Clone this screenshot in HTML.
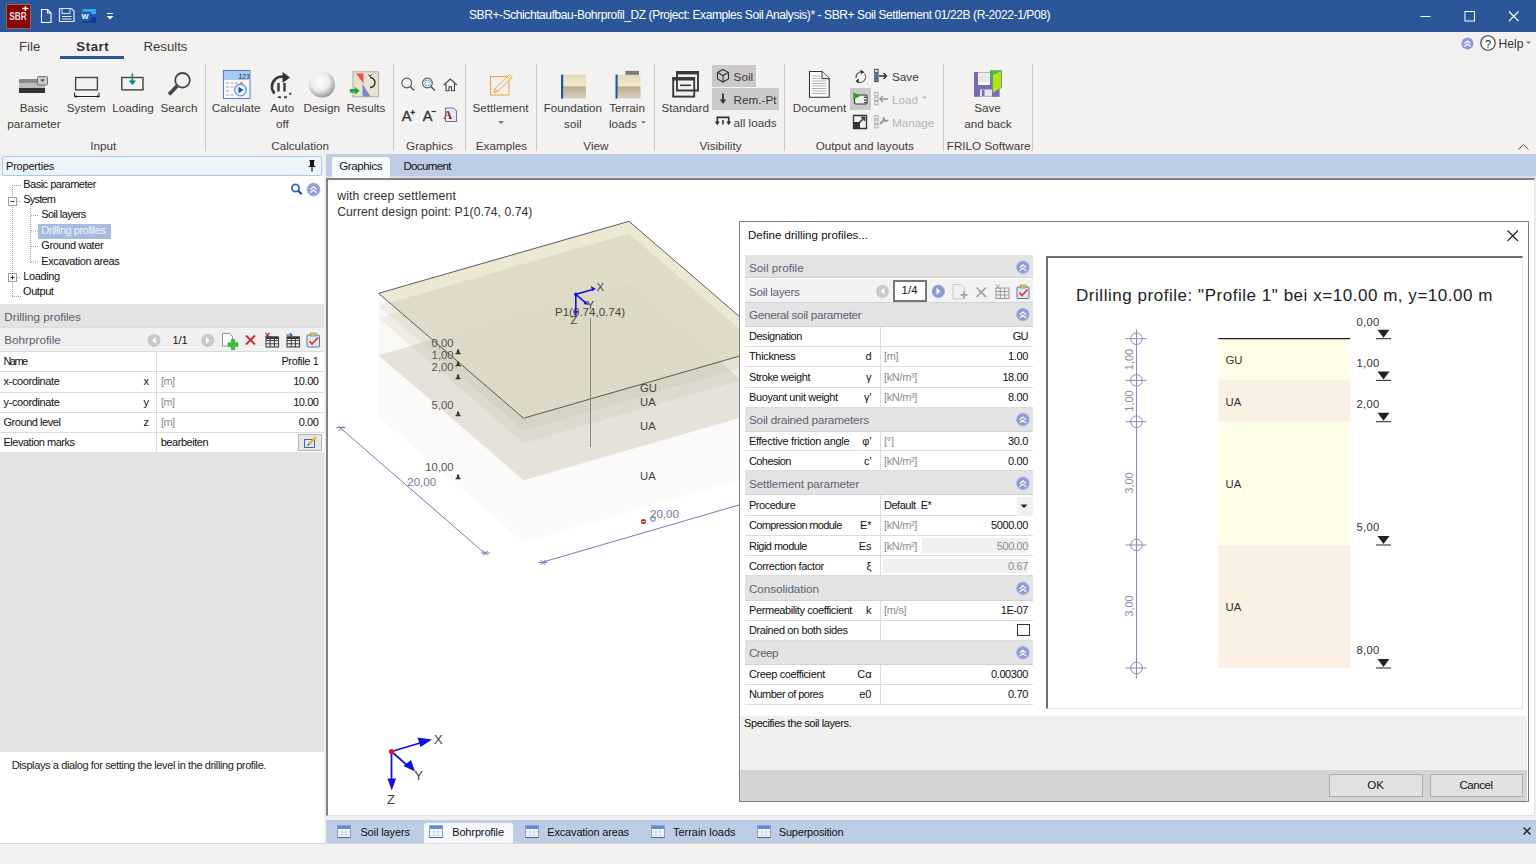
<!DOCTYPE html><html><head><meta charset="utf-8"><style>
html,body{margin:0;padding:0}
body{width:1536px;height:864px;position:relative;overflow:hidden;background:#f0f0f0;font-family:"Liberation Sans",sans-serif;}
.a{position:absolute;box-sizing:border-box}
.t{position:absolute;white-space:nowrap}
svg{position:absolute}
</style></head><body>
<div class="a" style="left:0px;top:0px;width:1536px;height:32px;background:#2b579a;"></div>
<div class="t" style="top:9.14px;font-size:12px;line-height:12px;color:#fff;letter-spacing:-0.410px;left:469px;">SBR+-Schichtaufbau-Bohrprofil_DZ (Project: Examples Soil Analysis)* - SBR+ Soil Settlement 01/22B (R-2022-1/P08)</div>
<div class="a" style="left:0px;top:32px;width:1536px;height:122px;background:#f3f2f1;"></div>
<div class="a" style="left:0px;top:154px;width:324px;height:689px;background:#fff;"></div>
<div class="a" style="left:326px;top:154px;width:1210px;height:22px;background:#bccde5;"></div>
<div class="a" style="left:326px;top:176px;width:1210px;height:2px;background:#d6e0ec;"></div>
<div class="a" style="left:326px;top:178px;width:1209px;height:638px;background:#fff;border-left:2px solid #828282;border-top:2px solid #828282;border-right:1px solid #e3e3e3;border-bottom:1px solid #e3e3e3;"></div>
<div class="a" style="left:326px;top:820px;width:1210px;height:23px;background:#bccde5;"></div>
<div class="a" style="left:0px;top:843px;width:1536px;height:21px;background:#f2f1f0;border-top:1px solid #d9d9d9;"></div>
<svg style="left:0;top:0" width="160" height="32">
<rect x="6.5" y="4.5" width="24" height="24" fill="#8b0000" stroke="#8a6a5a" stroke-width="1"/>
<text x="0" y="0" font-family="Liberation Sans" font-size="11" font-weight="bold" fill="#f0dede" text-anchor="middle" transform="translate(18,19.5) scale(0.75,0.98)">SBR</text>
<path d="M25.4 6.3v4.6M22.3 8.6h6.2" stroke="#fff" stroke-width="1.5"/>
<path d="M41.5 9.5h6l3.5 3.5v9.5h-9.5z M47.5 9.5v3.5h3.5" fill="none" stroke="#fff" stroke-width="1.1"/>
<path d="M59.5 8.5h12l2.5 2.5v10.5h-14.5z" fill="none" stroke="#dfe6f0" stroke-width="1.2"/>
<path d="M62 9v4.5h8V9" fill="none" stroke="#dfe6f0" stroke-width="1"/>
<path d="M62 16.5h9.5M62 19h9.5" stroke="#dfe6f0" stroke-width="1"/>
<rect x="81" y="9" width="15" height="14" fill="#185abd"/>
<rect x="81" y="9" width="15" height="5" fill="#41a5ee"/>
<rect x="81" y="17" width="15" height="6" fill="#103f91"/>
<rect x="80.9" y="9" width="1.5" height="14" fill="#0a7a5a"/><rect x="80.9" y="11.7" width="10" height="9.3" fill="#1f5bb8"/>
<text x="85" y="19" font-family="Liberation Sans" font-size="7.5" font-weight="bold" fill="#fff" text-anchor="middle">W</text>
<path d="M107 13.5h6" stroke="#fff" stroke-width="1"/>
<path d="M106.5 16h7l-3.5 3.5z" fill="#fff"/>
</svg>
<svg style="left:1400;top:0;left:1400px" width="136" height="32">
<path d="M20.5 16.5h10" stroke="#fff" stroke-width="1"/>
<rect x="65" y="11.5" width="9.5" height="9.5" fill="none" stroke="#fff" stroke-width="1"/>
<path d="M109 11.5l9.5 9.5M118.5 11.5l-9.5 9.5" stroke="#fff" stroke-width="1.1"/>
</svg>
<div class="t" style="top:39.63px;font-size:13.2px;line-height:13.2px;color:#3c3c3c;letter-spacing:0.033px;left:19px;">File</div>
<div class="t" style="top:39.63px;font-size:13.2px;line-height:13.2px;color:#333;font-weight:bold;letter-spacing:0.585px;left:76.3px;">Start</div>
<div class="t" style="top:39.63px;font-size:13.2px;line-height:13.2px;color:#3c3c3c;letter-spacing:-0.002px;left:143.5px;">Results</div>
<div class="a" style="left:60px;top:56px;width:64px;height:3px;background:#2b579a;"></div>
<svg style="left:1455px;top:32px" width="81" height="26">
<circle cx="12.5" cy="11.5" r="6" fill="#8e9bd8"/>
<path d="M9.5 11.5l3-2.5 3 2.5M9.5 14.5l3-2.5 3 2.5" fill="none" stroke="#fff" stroke-width="1.2"/>
<circle cx="33" cy="11" r="7.2" fill="#fff" stroke="#333" stroke-width="1.1"/>
<text x="33" y="15.5" font-family="Liberation Sans" font-size="11" fill="#222" text-anchor="middle">?</text>
<path d="M71 9.5h5l-2.5 2.5z" fill="#777"/>
</svg>
<div class="t" style="top:37.96px;font-size:12.1px;line-height:12.1px;color:#333;left:1498.5px;">Help</div>
<svg style="left:1515px;top:140px" width="18" height="12"><path d="M3.5 9.5l5-5 5 5" fill="none" stroke="#555" stroke-width="1"/></svg>
<div class="a" style="left:205px;top:64px;width:1px;height:87px;background:#c8c8c8;"></div>
<div class="a" style="left:393px;top:64px;width:1px;height:87px;background:#c8c8c8;"></div>
<div class="a" style="left:465px;top:64px;width:1px;height:87px;background:#c8c8c8;"></div>
<div class="a" style="left:536px;top:64px;width:1px;height:87px;background:#c8c8c8;"></div>
<div class="a" style="left:654px;top:64px;width:1px;height:87px;background:#c8c8c8;"></div>
<div class="a" style="left:784px;top:64px;width:1px;height:87px;background:#c8c8c8;"></div>
<div class="a" style="left:943px;top:64px;width:1px;height:87px;background:#c8c8c8;"></div>
<div class="a" style="left:1032px;top:64px;width:1px;height:87px;background:#c8c8c8;"></div>
<div class="t" style="top:102.30px;font-size:11.7px;line-height:11.7px;color:#3c3c3c;left:-366px;width:800px;text-align:center;">Basic</div>
<div class="t" style="top:117.70px;font-size:11.7px;line-height:11.7px;color:#3c3c3c;left:-366px;width:800px;text-align:center;">parameter</div>
<div class="t" style="top:102.30px;font-size:11.7px;line-height:11.7px;color:#3c3c3c;left:-313.7px;width:800px;text-align:center;">System</div>
<div class="t" style="top:102.30px;font-size:11.7px;line-height:11.7px;color:#3c3c3c;left:-267px;width:800px;text-align:center;">Loading</div>
<div class="t" style="top:102.30px;font-size:11.7px;line-height:11.7px;color:#3c3c3c;left:-221.1px;width:800px;text-align:center;">Search</div>
<div class="t" style="top:139.70px;font-size:11.7px;line-height:11.7px;color:#3c3c3c;left:-296.8px;width:800px;text-align:center;">Input</div>
<div class="t" style="top:102.30px;font-size:11.7px;line-height:11.7px;color:#3c3c3c;left:-163.8px;width:800px;text-align:center;">Calculate</div>
<div class="t" style="top:102.30px;font-size:11.7px;line-height:11.7px;color:#3c3c3c;left:-117.69999999999999px;width:800px;text-align:center;">Auto</div>
<div class="t" style="top:117.70px;font-size:11.7px;line-height:11.7px;color:#3c3c3c;left:-117.69999999999999px;width:800px;text-align:center;">off</div>
<div class="t" style="top:102.30px;font-size:11.7px;line-height:11.7px;color:#3c3c3c;left:-78.30000000000001px;width:800px;text-align:center;">Design</div>
<div class="t" style="top:102.30px;font-size:11.7px;line-height:11.7px;color:#3c3c3c;left:-34.10000000000002px;width:800px;text-align:center;">Results</div>
<div class="t" style="top:139.70px;font-size:11.7px;line-height:11.7px;color:#3c3c3c;left:-99.89999999999998px;width:800px;text-align:center;">Calculation</div>
<div class="t" style="top:139.70px;font-size:11.7px;line-height:11.7px;color:#3c3c3c;left:29.5px;width:800px;text-align:center;">Graphics</div>
<div class="t" style="top:102.30px;font-size:11.7px;line-height:11.7px;color:#3c3c3c;left:100.5px;width:800px;text-align:center;">Settlement</div>
<div class="t" style="top:139.70px;font-size:11.7px;line-height:11.7px;color:#3c3c3c;left:101.5px;width:800px;text-align:center;">Examples</div>
<div class="t" style="top:102.30px;font-size:11.7px;line-height:11.7px;color:#3c3c3c;left:172.89999999999998px;width:800px;text-align:center;">Foundation</div>
<div class="t" style="top:117.70px;font-size:11.7px;line-height:11.7px;color:#3c3c3c;left:172.89999999999998px;width:800px;text-align:center;">soil</div>
<div class="t" style="top:102.30px;font-size:11.7px;line-height:11.7px;color:#3c3c3c;left:227.10000000000002px;width:800px;text-align:center;">Terrain</div>
<div class="t" style="top:117.70px;font-size:11.7px;line-height:11.7px;color:#3c3c3c;left:608.9px;">loads</div>
<div class="t" style="top:139.70px;font-size:11.7px;line-height:11.7px;color:#3c3c3c;left:195.89999999999998px;width:800px;text-align:center;">View</div>
<div class="t" style="top:102.30px;font-size:11.7px;line-height:11.7px;color:#3c3c3c;left:285.29999999999995px;width:800px;text-align:center;">Standard</div>
<div class="t" style="top:139.70px;font-size:11.7px;line-height:11.7px;color:#3c3c3c;left:320.5px;width:800px;text-align:center;">Visibility</div>
<div class="a" style="left:712px;top:65px;width:44px;height:22px;background:#cbcac9;"></div>
<div class="a" style="left:712px;top:88px;width:67px;height:22px;background:#cbcac9;"></div>
<div class="t" style="top:70.70px;font-size:11.7px;line-height:11.7px;color:#3c3c3c;left:733.6px;">Soil</div>
<div class="t" style="top:93.70px;font-size:11.7px;line-height:11.7px;color:#3c3c3c;left:733.6px;">Rem.-Pt</div>
<div class="t" style="top:116.50px;font-size:11.7px;line-height:11.7px;color:#3c3c3c;left:733.6px;">all loads</div>
<div class="t" style="top:102.30px;font-size:11.7px;line-height:11.7px;color:#3c3c3c;left:419.5px;width:800px;text-align:center;">Document</div>
<div class="t" style="top:139.70px;font-size:11.7px;line-height:11.7px;color:#3c3c3c;left:464.70000000000005px;width:800px;text-align:center;">Output and layouts</div>
<div class="a" style="left:850px;top:88px;width:21px;height:22px;background:#cbcac9;"></div>
<div class="t" style="top:70.70px;font-size:11.7px;line-height:11.7px;color:#3c3c3c;left:892px;">Save</div>
<div class="t" style="top:93.70px;font-size:11.7px;line-height:11.7px;color:#b4b4b4;left:892px;">Load</div>
<div class="t" style="top:116.70px;font-size:11.7px;line-height:11.7px;color:#b4b4b4;left:892px;">Manage</div>
<div class="t" style="top:102.30px;font-size:11.7px;line-height:11.7px;color:#3c3c3c;left:587.5px;width:800px;text-align:center;">Save</div>
<div class="t" style="top:117.70px;font-size:11.7px;line-height:11.7px;color:#3c3c3c;left:587.9px;width:800px;text-align:center;">and back</div>
<div class="t" style="top:139.70px;font-size:11.7px;line-height:11.7px;color:#3c3c3c;left:588.7px;width:800px;text-align:center;">FRILO Software</div>
<svg style="left:0;top:60px" width="1040" height="80" >
<g transform="translate(0,-60)">
<!-- basic parameter -->
<rect x="19" y="79" width="26" height="4.5" fill="#8a8a8a"/>
<rect x="19" y="83.5" width="26" height="4.5" fill="#bdbdbd"/>
<rect x="19" y="88" width="26" height="5" fill="#333"/>
<rect x="37.5" y="76.5" width="10" height="8.5" rx="1" fill="#c8c8c8" stroke="#777" stroke-width="1"/>
<path d="M40.5 79.5h4l-2 2.2z" fill="#333"/>
<!-- system -->
<rect x="75.6" y="77.5" width="21.8" height="12.4" fill="none" stroke="#444" stroke-width="1.4"/>
<path d="M74 96.5h25.5M74.5 92.5v4.5M99 92.5v4.5" fill="none" stroke="#222" stroke-width="1"/>
<path d="M74 96.5l2.5-1.5v3zM99.5 96.5l-2.5-1.5v3z" fill="#222"/>
<!-- loading -->
<rect x="121.8" y="77.5" width="21.2" height="12.4" fill="none" stroke="#444" stroke-width="1.4"/>
<path d="M132.4 73.5v8" stroke="#00868b" stroke-width="1.6"/>
<path d="M128.6 80.5h7.6l-3.8 4.6z" fill="#00868b"/>
<!-- search -->
<circle cx="182.5" cy="80.3" r="7.3" fill="none" stroke="#444" stroke-width="1.8"/>
<path d="M177 86l-8 8.5" stroke="#444" stroke-width="3.6"/>
<!-- calculate -->
<rect x="223.5" y="70.5" width="26.5" height="28" fill="#f6f9fd" stroke="#4f7fcf" stroke-width="1"/>
<rect x="224" y="71" width="25.5" height="9" fill="#a9c8f2"/>
<text x="244" y="78.5" font-family="Liberation Sans" font-style="italic" font-size="7" fill="#233" text-anchor="middle">123</text>
<g fill="#c9cdd4"><rect x="226" y="82" width="3" height="2"/><rect x="230.5" y="82" width="3" height="2"/><rect x="235" y="82" width="3" height="2"/><rect x="226" y="86" width="3" height="2"/><rect x="230.5" y="86" width="3" height="2"/><rect x="226" y="90" width="3" height="2"/><rect x="226" y="94" width="3" height="2"/><rect x="230.5" y="94" width="3" height="2"/></g>
<rect x="240" y="82" width="3" height="2" fill="#e6a24a"/>
<circle cx="240.5" cy="90" r="5.8" fill="#eaf2fb" stroke="#5b93d6" stroke-width="1.3"/>
<path d="M238.5 86.8v6.4l5-3.2z" fill="#1a4fa8"/>
<!-- auto off -->
<path d="M274.5 93.5a10 10 0 0 1 9.5-16.5" fill="none" stroke="#3a3a3a" stroke-width="2.8"/>
<path d="M282.5 72l7.5 5.5-7.5 5.5z" fill="#333"/>
<path d="M278 96.8l3 0.7M284 97.5l3-0.7M289.5 94.5l1.5-1.5" stroke="#444" stroke-width="1.8"/>
<rect x="277.3" y="83" width="2.4" height="8.5" fill="#3a3a3a"/><rect x="283.3" y="83" width="2.4" height="8.5" fill="#3a3a3a"/>
<!-- design sphere -->
<defs><radialGradient id="sph" cx="0.42" cy="0.38" r="0.65"><stop offset="0" stop-color="#fff"/><stop offset="0.55" stop-color="#ececec"/><stop offset="0.9" stop-color="#a8a8a8"/><stop offset="1" stop-color="#808080"/></radialGradient></defs>
<circle cx="321.9" cy="84.5" r="13" fill="url(#sph)"/>
<!-- results -->
<rect x="353" y="71.8" width="25.5" height="25" fill="#e9e3cf" stroke="#aaa" stroke-width="1"/>
<path d="M356 73.5h7.5v10z" fill="#f05050"/>
<path d="M362.5 84v12.5h8z" fill="#6a8ec8"/>
<path d="M349.8 89h5v-2.3l5 4-5 4v-2.3h-5z" fill="#22aa33"/>
<path d="M370 77.5a5 5 0 0 1 0 10" fill="none" stroke="#222" stroke-width="1.3"/>
<path d="M368.5 74.5l1.5 2 1.5-2" fill="none" stroke="#222" stroke-width="1"/>
<!-- graphics small -->
<circle cx="406.7" cy="83" r="4.9" fill="none" stroke="#555" stroke-width="1.1"/>
<path d="M410.2 86.5l4 4" stroke="#555" stroke-width="1.5"/>
<circle cx="427.4" cy="83" r="4.9" fill="none" stroke="#555" stroke-width="1.1"/>
<rect x="425" y="80.6" width="4.8" height="4.8" fill="none" stroke="#3d9be0" stroke-width="1" stroke-dasharray="1.5 1"/>
<path d="M430.9 86.5l4 4" stroke="#555" stroke-width="1.5"/>
<path d="M443.8 85l6.5-6 6.5 6M446 84v6.8h3v-4h2.5v4h3V84" fill="none" stroke="#444" stroke-width="1.1"/>
<text x="401.8" y="121" font-family="Liberation Sans" font-size="14.5" fill="#333" stroke="#333" stroke-width="0.35">A</text>
<path d="M410.5 112.3h4.5M412.75 110v4.6" stroke="#333" stroke-width="1.2"/>
<text x="422.8" y="121" font-family="Liberation Sans" font-size="14.5" fill="#333" stroke="#333" stroke-width="0.35">A</text>
<path d="M431.5 111.5h4.5" stroke="#333" stroke-width="1.2"/>
<path d="M445.5 108h8l3 3v10.5h-11z" fill="#e3ebf6" stroke="#3a5a8a" stroke-width="0.8"/>
<text x="443.2" y="118.5" font-family="Liberation Serif" font-weight="bold" font-size="12.5" fill="#a01818">A</text>
<!-- settlement -->
<rect x="490.5" y="76.5" width="18.5" height="18.5" fill="none" stroke="#f5a040" stroke-width="1"/>
<path d="M494 92.5l1-4 14.5-14 2.8 2.8-14.5 14z M495 88.5l3 3 M507.5 76.5l2.8 2.8" fill="#f1f1f1" stroke="#f5a040" stroke-width="1"/>
<path d="M498 121h6l-3 3z" fill="#777"/>
<!-- foundation soil -->
<defs><linearGradient id="fs1" x1="0" y1="0" x2="0" y2="1"><stop offset="0" stop-color="#e3d8bf"/><stop offset="1" stop-color="#f2ecc9"/></linearGradient>
<linearGradient id="fs2" x1="0" y1="0" x2="0" y2="1"><stop offset="0" stop-color="#b7ac92"/><stop offset="1" stop-color="#d9d0c0"/></linearGradient></defs>
<rect x="563" y="74.6" width="23" height="11.8" fill="url(#fs1)"/><rect x="563" y="86.3" width="23" height="12.2" fill="url(#fs2)"/>
<rect x="561" y="74.6" width="2.2" height="24" fill="#1a5aa8"/>
<rect x="618" y="74.8" width="22.5" height="11.5" fill="url(#fs1)"/><rect x="618" y="86.3" width="22.5" height="12.2" fill="url(#fs2)"/>
<rect x="615.5" y="74.6" width="2.2" height="24" fill="#1a5aa8"/>
<rect x="625.5" y="70.9" width="13.5" height="3.9" fill="#7a7a7a"/>
<path d="M641 121.2h5l-2.5 2.5z" fill="#777"/>
<!-- standard -->
<path d="M677 72h21v18.5h-21z" fill="none" stroke="#3a3a3a" stroke-width="1.9"/>
<rect x="676.2" y="71" width="22.7" height="3.4" fill="#3a3a3a"/>
<rect x="673.2" y="78" width="21" height="18.6" fill="none" stroke="#3a3a3a" stroke-width="1.9"/>
<rect x="672.3" y="77.1" width="22.4" height="3.4" fill="#3a3a3a"/>
<path d="M680 85.3h11" stroke="#3a3a3a" stroke-width="1.6"/>
<!-- cube -->
<path d="M723 69.5l5.5 3v6.5l-5.5 3-5.5-3v-6.5z M717.5 72.5l5.5 3 5.5-3 M723 75.5v6.5" fill="none" stroke="#333" stroke-width="1.1"/>
<path d="M723 93.5v7" stroke="#333" stroke-width="1.8"/><path d="M719.8 99.5h6.4l-3.2 4.5z" fill="#333"/>
<path d="M717.3 122v-4.6h11.4v4.6 M723 120v4.5" fill="none" stroke="#333" stroke-width="1.6"/><path d="M714.8 121.5h5l-2.5 3.8zM726.2 121.5h5l-2.5 3.8z" fill="#333"/>
<!-- document -->
<path d="M809.5 71.5h12.5l7.2 7.2v18.6h-19.7z" fill="#fff" stroke="#333" stroke-width="1.1"/>
<path d="M822 71.5v7.2h7.2" fill="#eee" stroke="#333" stroke-width="1"/>
<g stroke="#999" stroke-width="0.8"><path d="M812 76h8M812 78.5h8M812 81h14M812 83.5h14M812 86h14M812 88.5h14M812 91h14M812 93.5h14"/></g>
<!-- refresh -->
<path d="M856 78a5.5 5.5 0 0 1 8-5.5M864.5 73.5a5.5 5.5 0 0 1-8 7.5" fill="none" stroke="#555" stroke-width="1.1"/>
<path d="M860.5 69.5l3.5 2.5-3 2.5z M859 83.5l-3.5-2.5 3-2.5z" fill="#333"/>
<rect x="854.5" y="95" width="12.5" height="9" rx="1.5" fill="#eee" stroke="#333" stroke-width="1.1"/><rect x="864.3" y="96.5" width="1.6" height="1.6" fill="#333"/><rect x="864.3" y="99.5" width="1.6" height="1.6" fill="#333"/><rect x="864.3" y="102" width="1.6" height="1.2" fill="#333"/>
<path d="M853.3 92.3L860 96L853.3 99.8z" fill="#2a9a2a"/>
<path d="M853.5 115.5h13v13h-13z" fill="none" stroke="#333" stroke-width="1.3"/>
<rect x="853.5" y="122" width="6.5" height="6.5" fill="#333"/>
<path d="M858.5 123.5l6-6M861 117.5h3.5v3.5" fill="none" stroke="#333" stroke-width="1.5"/>
<!-- save load manage -->
<g fill="none" stroke="#333" stroke-width="0.9"><rect x="874.7" y="69.3" width="3.4" height="3.4"/></g>
<rect x="874.7" y="73.8" width="3.4" height="3.4" fill="#39a0e8" stroke="#333" stroke-width="0.8"/>
<rect x="874.7" y="78.3" width="3.4" height="3.4" fill="#39a0e8" stroke="#333" stroke-width="0.8"/>
<path d="M879 76h7M883.5 73l3 3-3 3" fill="none" stroke="#333" stroke-width="1.4"/>
<g fill="none" stroke="#aaa" stroke-width="0.9"><rect x="874.7" y="92.5" width="3.4" height="3.4"/><rect x="874.7" y="97" width="3.4" height="3.4"/><rect x="874.7" y="101.5" width="3.4" height="3.4"/>
<rect x="874.7" y="115.5" width="3.4" height="3.4"/><rect x="874.7" y="120" width="3.4" height="3.4"/><rect x="874.7" y="124.5" width="3.4" height="3.4"/></g>
<path d="M880 99h8M883 96l-3 3 3 3" fill="none" stroke="#999" stroke-width="1.4"/>
<path d="M880 124l5-5M884 117a2.5 2.5 0 1 0 4 3" fill="none" stroke="#999" stroke-width="1.8"/>
<path d="M922 96.5h5l-2.5 2.5z" fill="#bbb"/>
<!-- save and back -->
<rect x="974" y="72" width="25.6" height="24.8" fill="#7b68b8"/>
<rect x="978" y="72.5" width="12" height="12.5" fill="#f4f4f4"/>
<g stroke="#ccc" stroke-width="0.6"><path d="M979 75h10M979 77h10M979 79h10M979 81h10"/></g>
<rect x="980" y="89.5" width="12" height="7" fill="#e6e6e6"/>
<rect x="982" y="90" width="2.5" height="6" fill="#7b68b8"/>
<path d="M989.8 70.2h12.2v17.5l-9 5.3z" fill="#48b848"/>
<path d="M993 75l8-4v16.5l-8 5.2z" fill="#b8e020"/>
</g></svg>
<div class="a" style="left:0px;top:154px;width:326px;height:689px;background:#f0f0f0;"></div>
<div class="a" style="left:0px;top:176px;width:324px;height:128px;background:#fff;"></div>
<div class="a" style="left:2px;top:156px;width:320px;height:20px;background:#eef5fd;border:1px solid #a9c9ef;border-radius:2px;"></div>
<div class="t" style="top:161.09px;font-size:11px;line-height:11px;color:#111;letter-spacing:-0.203px;left:6px;">Properties</div>
<svg style="left:306px;top:159px" width="12" height="14"><path d="M3.5 1.5h5M4.5 1.5v6M7.5 1.5v6M2.5 7.5h7M6 7.5v5" fill="none" stroke="#111" stroke-width="1.2"/><rect x="4.5" y="1.5" width="3" height="6" fill="#111"/></svg>
<div class="t" style="top:178.89px;font-size:11px;line-height:11px;color:#111;letter-spacing:-0.499px;left:23.2px;">Basic parameter</div>
<div class="t" style="top:194.29px;font-size:11px;line-height:11px;color:#111;letter-spacing:-0.779px;left:23.2px;">System</div>
<div class="t" style="top:209.49px;font-size:11px;line-height:11px;color:#111;letter-spacing:-0.567px;left:41.3px;">Soil layers</div>
<div class="a" style="left:38px;top:224px;width:73px;height:15px;background:#a6bbe2;"></div>
<div class="t" style="top:224.89px;font-size:11px;line-height:11px;color:#eef2fa;letter-spacing:-0.467px;left:41.3px;">Drilling profiles</div>
<div class="t" style="top:240.19px;font-size:11px;line-height:11px;color:#111;letter-spacing:-0.387px;left:41.3px;">Ground water</div>
<div class="t" style="top:255.69px;font-size:11px;line-height:11px;color:#111;letter-spacing:-0.398px;left:41.3px;">Excavation areas</div>
<div class="t" style="top:270.89px;font-size:11px;line-height:11px;color:#111;letter-spacing:-0.378px;left:23.2px;">Loading</div>
<div class="t" style="top:286.39px;font-size:11px;line-height:11px;color:#111;letter-spacing:-0.420px;left:23px;">Output</div>
<svg style="left:0;top:176px" width="60" height="128"><g transform="translate(0,-176)" fill="none" stroke="#a0a0a0" stroke-width="1" stroke-dasharray="1 1">
<path d="M12.5 185v111M12 185.5h9M17 201.5h4M17 277.5h4M12 296.5h9M30.5 206v57M31 215.5h8M31 231h7M31 246.5h8M31 262h8"/>
</g>
<g transform="translate(0,-176)">
<rect x="8.5" y="197.5" width="8" height="8" fill="#fff" stroke="#a0a0a0"/><path d="M10.5 201.5h4" stroke="#333"/>
<rect x="8.5" y="273.5" width="8" height="8" fill="#fff" stroke="#a0a0a0"/><path d="M10.5 277.5h4M12.5 275.5v4" stroke="#333"/>
</g></svg>
<svg style="left:288px;top:180px" width="34" height="18"><g transform="translate(-288,-180)">
<circle cx="295.5" cy="188" r="3.6" fill="none" stroke="#2a6cc0" stroke-width="1.8"/><path d="M298.2 190.7l3.5 3.5" stroke="#1b4f9a" stroke-width="2.2"/>
<circle cx="313.5" cy="189.5" r="6.5" fill="#8e9bd8"/><circle cx="313.5" cy="189.5" r="6.5" fill="none" stroke="#b3bde8" stroke-width="1"/>
<path d="M310.3 189.5l3.2-2.7 3.2 2.7M310.3 192.8l3.2-2.7 3.2 2.7" fill="none" stroke="#fff" stroke-width="1.3"/>
</g></svg>
<div class="a" style="left:0px;top:304px;width:324px;height:23px;background:#e3e3e3;"></div>
<div class="t" style="top:310.50px;font-size:11.7px;line-height:11.7px;color:#596070;left:4.3px;">Drilling profiles</div>
<div class="a" style="left:0px;top:327px;width:324px;height:24px;background:#f0f0f0;border-top:1px solid #dcdcdc;"></div>
<div class="t" style="top:334.10px;font-size:11.7px;line-height:11.7px;color:#596070;left:4.3px;">Bohrprofile</div>
<div class="t" style="top:335.19px;font-size:11px;line-height:11px;color:#111;letter-spacing:-0.097px;left:172.5px;">1/1</div>
<svg style="left:140px;top:330px" width="184" height="20"><g transform="translate(-140,-330)">
<circle cx="154" cy="340.4" r="6.5" fill="#c9c9c9"/><path d="M155.8 337l-3.6 3.4 3.6 3.4z" fill="#fff"/>
<circle cx="207.8" cy="340.4" r="6.5" fill="#c9c9c9"/><path d="M206 337l3.6 3.4-3.6 3.4z" fill="#fff"/>
<path d="M222.5 333.5h7l3 3v9.5h-10z" fill="#fff" stroke="#888" stroke-width="0.9"/>
<path d="M231.3 339.5h3.4v3.3h3.3v3.4h-3.3v3.3h-3.4v-3.3h-3.3v-3.4h3.3z" fill="#3cc03c" stroke="#2a9a2a" stroke-width="0.6"/>
<path d="M246 335.5l9 9M255 335.5l-9 9" stroke="#c83232" stroke-width="1.9"/>
<rect x="266" y="336.5" width="12.5" height="2.5" fill="#333"/><g fill="none" stroke="#444" stroke-width="1.1"><rect x="266" y="337" width="12.5" height="10"/><path d="M266 340.5h12.5M266 343.7h12.5M270.2 337v10M274.4 337v10"/></g>
<path d="M265.5 333l4 4M269.5 333l-4 4" stroke="#c03030" stroke-width="1.1"/>
<rect x="287" y="336.5" width="12.5" height="2.5" fill="#333"/><g fill="none" stroke="#444" stroke-width="1.1"><rect x="287" y="337" width="12.5" height="10"/><path d="M287 340.5h12.5M287 343.7h12.5M291.2 337v10M295.4 337v10"/></g>
<path d="M286 335h6M290 333l2 2-2 2" fill="none" stroke="#2a60b0" stroke-width="1.1"/>
<rect x="307" y="335" width="12.5" height="12" rx="1" fill="#dbe6f4" stroke="#4a6a9a" stroke-width="0.9"/>
<rect x="310.5" y="333" width="5.5" height="3" fill="#e8c860" stroke="#8a7a40" stroke-width="0.6"/>
<path d="M309.5 341l2.5 3 6-6.5" fill="none" stroke="#e03020" stroke-width="1.6"/>
</g></svg>
<div class="a" style="left:0px;top:351px;width:324px;height:101px;background:#fff;"></div>
<div class="a" style="left:0px;top:351px;width:324px;height:1px;background:#dcdcdc;"></div>
<div class="a" style="left:0px;top:371px;width:324px;height:1px;background:#dcdcdc;"></div>
<div class="a" style="left:0px;top:392px;width:324px;height:1px;background:#dcdcdc;"></div>
<div class="a" style="left:0px;top:412px;width:324px;height:1px;background:#dcdcdc;"></div>
<div class="a" style="left:0px;top:432px;width:324px;height:1px;background:#dcdcdc;"></div>
<div class="a" style="left:0px;top:452px;width:324px;height:1px;background:#dcdcdc;"></div>
<div class="a" style="left:156px;top:351px;width:1px;height:101px;background:#dcdcdc;"></div>
<div class="t" style="top:356.19px;font-size:11px;line-height:11px;color:#111;letter-spacing:-1.585px;left:3.5px;">Name</div>
<div class="t" style="top:356.19px;font-size:11px;line-height:11px;color:#111;letter-spacing:-0.359px;right:1217.5px;">Profile 1</div>
<div class="t" style="top:376.49px;font-size:11px;line-height:11px;color:#111;letter-spacing:-0.377px;left:3.5px;">x-coordinate</div>
<div class="t" style="top:376.49px;font-size:11px;line-height:11px;color:#111;left:143.5px;">x</div>
<div class="t" style="top:376.49px;font-size:11px;line-height:11px;color:#8c8c8c;letter-spacing:-0.592px;left:161px;">[m]</div>
<div class="t" style="top:376.49px;font-size:11px;line-height:11px;color:#111;letter-spacing:-0.440px;right:1217.5px;">10.00</div>
<div class="t" style="top:396.69px;font-size:11px;line-height:11px;color:#111;letter-spacing:-0.377px;left:3.5px;">y-coordinate</div>
<div class="t" style="top:396.69px;font-size:11px;line-height:11px;color:#111;left:143.5px;">y</div>
<div class="t" style="top:396.69px;font-size:11px;line-height:11px;color:#8c8c8c;letter-spacing:-0.592px;left:161px;">[m]</div>
<div class="t" style="top:396.69px;font-size:11px;line-height:11px;color:#111;letter-spacing:-0.440px;right:1217.5px;">10.00</div>
<div class="t" style="top:416.89px;font-size:11px;line-height:11px;color:#111;letter-spacing:-0.447px;left:3.5px;">Ground level</div>
<div class="t" style="top:416.89px;font-size:11px;line-height:11px;color:#111;left:143.5px;">z</div>
<div class="t" style="top:416.89px;font-size:11px;line-height:11px;color:#8c8c8c;letter-spacing:-0.592px;left:161px;">[m]</div>
<div class="t" style="top:416.89px;font-size:11px;line-height:11px;color:#111;letter-spacing:-0.428px;right:1217.5px;">0.00</div>
<div class="t" style="top:436.99px;font-size:11px;line-height:11px;color:#111;letter-spacing:-0.483px;left:3.5px;">Elevation marks</div>
<div class="t" style="top:437.19px;font-size:11px;line-height:11px;color:#111;letter-spacing:-0.448px;left:160.7px;">bearbeiten</div>
<div class="a" style="left:298px;top:434px;width:24px;height:17px;background:#e6e6e6;border:1px solid #b4b4b4;"></div>
<svg style="left:303px;top:436px" width="16" height="13"><rect x="1.5" y="3.5" width="10" height="8" fill="#dde8f6" stroke="#3a5a9a" stroke-width="0.9"/><path d="M5 9l8-8" stroke="#e8b020" stroke-width="2"/><path d="M4 10l1.5-2.5 1 1z" fill="#333"/></svg>
<div class="a" style="left:0px;top:452px;width:324px;height:300px;background:#e3e3e3;"></div>
<div class="a" style="left:0px;top:752px;width:324px;height:91px;background:#fff;"></div>
<div class="t" style="top:760.49px;font-size:11px;line-height:11px;color:#222;letter-spacing:-0.392px;left:11.7px;">Displays a dialog for setting the level in the drilling profile.</div>
<div class="a" style="left:332px;top:157px;width:58px;height:21px;background:#f5f9fe;border-radius:3px 3px 0 0;"></div>
<div class="t" style="top:161.47px;font-size:11.5px;line-height:11.5px;color:#111;letter-spacing:-0.377px;left:339.2px;">Graphics</div>
<div class="t" style="top:161.47px;font-size:11.5px;line-height:11.5px;color:#111;letter-spacing:-0.626px;left:403.4px;">Document</div>
<div class="t" style="top:189.77px;font-size:12.2px;line-height:12.2px;color:#333;letter-spacing:0.178px;left:337.2px;">with creep settlement</div>
<div class="t" style="top:206.17px;font-size:12.2px;line-height:12.2px;color:#333;letter-spacing:0.040px;left:337.2px;">Current design point: P1(0.74, 0.74)</div>
<svg style="left:328px;top:180px" width="1206" height="635"><g transform="translate(-328,-180)"><defs><clipPath id="cin"><polygon points="378.6,293.3 629.0,221.3 773.9,346.2 523.5,418.2"/></clipPath><clipPath id="cout"><path clip-rule="evenodd" d="M328 180H1534V815H328Z M378.6 293.3L629 221.3L773.9 346.2L523.5 418.2Z"/></clipPath></defs><polygon points="378.6,293.3 523.5,418.2 523.5,480.2 378.6,355.3" fill="#c8bea0" fill-opacity="0.1" /><polygon points="523.5,418.2 773.9,346.2 773.9,408.2 523.5,480.2" fill="#c8bea0" fill-opacity="0.1" /><polygon points="378.6,355.3 523.5,480.2 523.5,542.2 378.6,417.3" fill="#c8bea0" fill-opacity="0.07" /><polygon points="523.5,480.2 773.9,408.2 773.9,470.2 523.5,542.2" fill="#c8bea0" fill-opacity="0.07" /><g clip-path="url(#cin)"><polygon points="378.6,293.3 629.0,221.3 773.9,346.2 523.5,418.2" fill="#b4a55a" fill-opacity="0.26" /></g><g clip-path="url(#cin)"><polygon points="378.6,305.7 629.0,233.7 773.9,358.6 523.5,430.6" fill="#a09a8c" fill-opacity="0.16" /></g><g clip-path="url(#cout)"><polygon points="378.6,305.7 629.0,233.7 773.9,358.6 523.5,430.6" fill="#a09a8c" fill-opacity="0.12" /></g><g clip-path="url(#cout)"><polygon points="378.6,318.1 629.0,246.1 773.9,371.0 523.5,443.0" fill="#c8bc9c" fill-opacity="0.2" /></g><g clip-path="url(#cin)"><polygon points="378.6,355.3 629.0,283.3 773.9,408.2 523.5,480.2" fill="#a89e86" fill-opacity="0.035" /></g><g clip-path="url(#cout)"><polygon points="378.6,355.3 629.0,283.3 773.9,408.2 523.5,480.2" fill="#a89e86" fill-opacity="0.24" /></g><polygon points="378.6,293.3 629,221.3 773.9,346.2 523.5,418.2" fill="none" stroke="#4a4a4a" stroke-width="0.9"/>
<path d="M590.5 318v129" stroke="#8a8a8a" stroke-width="1"/>
<g stroke="#7b7bb0" stroke-width="1" fill="none">
<path d="M341 428.5l144.6 125.5"/><path d="M336.5 427.5h9M338.5 426l5 5M343.5 426l-5 5M481 553h9M483 550.5l5 5M488 550.5l-5 5"/>
<path d="M543 562l196-57"/><path d="M538.5 562.5h9M540.5 560l5 5M545.5 560l-5 5"/>
</g>
<circle cx="643.5" cy="521.5" r="2.5" fill="#d02020"/><path d="M641.8 521.5h3.4" stroke="#fff" stroke-width="0.8"/>
<circle cx="653" cy="519" r="2.3" fill="none" stroke="#5060c0" stroke-width="1"/>
<g fill="#3a3a30">
<path d="M455.5 354.2h5.2v-1.2h-1l-0.6-2.8a1 1 0 0 0-2 0l-0.6 2.8h-1z"/><path d="M455.5 366.2h5.2v-1.2h-1l-0.6-2.8a1 1 0 0 0-2 0l-0.6 2.8h-1z"/><path d="M455.5 379.2h5.2v-1.2h-1l-0.6-2.8a1 1 0 0 0-2 0l-0.6 2.8h-1z"/><path d="M455.5 416.2h5.2v-1.2h-1l-0.6-2.8a1 1 0 0 0-2 0l-0.6 2.8h-1z"/><path d="M455.5 479.2h5.2v-1.2h-1l-0.6-2.8a1 1 0 0 0-2 0l-0.6 2.8h-1z"/>
</g>
<g stroke="#1010e0" stroke-width="1.6" fill="none"><path d="M575.8 294.3l18-5M575.8 294.3l10 8.5M575.8 294.3v18"/></g>
<g fill="#1010e0"><path d="M596 289l-5-3 1 5z"/><path d="M588.5 305l-5-1 2.5-3z"/><circle cx="575.8" cy="294.3" r="1.8"/><path d="M573.5 311h4.6l-2.3 4.5z"/></g>
<g stroke="#1010e0" stroke-width="1.8" fill="none"><path d="M391.5 751.5l37-11M391.5 751.5l17 15M391.5 751.5v30"/></g>
<g fill="#1010e0"><path d="M432 739.5L417.5 737.5L420.5 747z"/><path d="M415 771.5L403.5 766L411 760z"/><path d="M387.4 778.5h8.6l-4.2 12.1z"/></g>
<circle cx="391.5" cy="751.5" r="2.6" fill="#ee1111"/>
</svg>
<div class="t" style="top:337.73px;font-size:11.3px;line-height:11.3px;color:#555;right:1082.4px;">0,00</div>
<div class="t" style="top:349.83px;font-size:11.3px;line-height:11.3px;color:#555;right:1082.4px;">1,00</div>
<div class="t" style="top:362.43px;font-size:11.3px;line-height:11.3px;color:#555;right:1082.4px;">2,00</div>
<div class="t" style="top:400.23px;font-size:11.3px;line-height:11.3px;color:#555;right:1082.4px;">5,00</div>
<div class="t" style="top:462.13px;font-size:11.3px;line-height:11.3px;color:#555;right:1082.4px;">10,00</div>
<div class="t" style="top:475.78px;font-size:11.6px;line-height:11.6px;color:#7878a8;left:407.2px;">20,00</div>
<div class="t" style="top:508.18px;font-size:11.6px;line-height:11.6px;color:#7878a8;left:650px;">20,00</div>
<div class="t" style="top:382.93px;font-size:11.3px;line-height:11.3px;color:#444;left:640px;">GU</div>
<div class="t" style="top:396.93px;font-size:11.3px;line-height:11.3px;color:#444;left:640px;">UA</div>
<div class="t" style="top:420.93px;font-size:11.3px;line-height:11.3px;color:#444;left:640px;">UA</div>
<div class="t" style="top:470.93px;font-size:11.3px;line-height:11.3px;color:#444;left:640px;">UA</div>
<div class="t" style="top:307.47px;font-size:11.5px;line-height:11.5px;color:#444;letter-spacing:0.025px;left:555px;">P1(0.74,0.74)</div>
<div class="t" style="top:282.27px;font-size:11.5px;line-height:11.5px;color:#444;left:596.5px;">X</div>
<div class="t" style="top:300.27px;font-size:11.5px;line-height:11.5px;color:#444;left:586.5px;">Y</div>
<div class="t" style="top:315.27px;font-size:11.5px;line-height:11.5px;color:#444;left:570.5px;">Z</div>
<div class="t" style="top:732.50px;font-size:13px;line-height:13px;color:#444;left:434px;">X</div>
<div class="t" style="top:768.50px;font-size:13px;line-height:13px;color:#444;left:414.2px;">Y</div>
<div class="t" style="top:793.00px;font-size:13px;line-height:13px;color:#444;left:387px;">Z</div>
<div class="a" style="left:424px;top:823px;width:89px;height:20px;background:#f5f9fe;border-radius:3px 3px 0 0;"></div>
<svg style="left:337px;top:825px" width="15" height="14"><rect x="0.5" y="0.5" width="13" height="12" fill="#fff" stroke="#8aa0c8" stroke-width="1"/><rect x="1" y="1" width="12" height="3" fill="#5b8de0"/><g stroke="#c0cce0" stroke-width="0.8"><path d="M1 7h12M1 10h12M5 4v9M9 4v9"/></g><path d="M0.5 12.5h13" stroke="#4060a0" stroke-width="1"/></svg>
<div class="t" style="top:826.59px;font-size:11px;line-height:11px;color:#111;letter-spacing:-0.113px;left:360.4px;">Soil layers</div>
<svg style="left:429px;top:825px" width="15" height="14"><rect x="0.5" y="0.5" width="13" height="12" fill="#fff" stroke="#8aa0c8" stroke-width="1"/><rect x="1" y="1" width="12" height="3" fill="#5b8de0"/><g stroke="#c0cce0" stroke-width="0.8"><path d="M1 7h12M1 10h12M5 4v9M9 4v9"/></g><path d="M0.5 12.5h13" stroke="#4060a0" stroke-width="1"/></svg>
<div class="t" style="top:826.59px;font-size:11px;line-height:11px;color:#111;letter-spacing:-0.136px;left:452.2px;">Bohrprofile</div>
<svg style="left:525px;top:825px" width="15" height="14"><rect x="0.5" y="0.5" width="13" height="12" fill="#fff" stroke="#8aa0c8" stroke-width="1"/><rect x="1" y="1" width="12" height="3" fill="#5b8de0"/><g stroke="#c0cce0" stroke-width="0.8"><path d="M1 7h12M1 10h12M5 4v9M9 4v9"/></g><path d="M0.5 12.5h13" stroke="#4060a0" stroke-width="1"/></svg>
<div class="t" style="top:826.59px;font-size:11px;line-height:11px;color:#111;letter-spacing:-0.173px;left:547.3px;">Excavation areas</div>
<svg style="left:651px;top:825px" width="15" height="14"><rect x="0.5" y="0.5" width="13" height="12" fill="#fff" stroke="#8aa0c8" stroke-width="1"/><rect x="1" y="1" width="12" height="3" fill="#5b8de0"/><g stroke="#c0cce0" stroke-width="0.8"><path d="M1 7h12M1 10h12M5 4v9M9 4v9"/></g><path d="M0.5 12.5h13" stroke="#4060a0" stroke-width="1"/></svg>
<div class="t" style="top:826.59px;font-size:11px;line-height:11px;color:#111;letter-spacing:-0.052px;left:673.1px;">Terrain loads</div>
<svg style="left:757px;top:825px" width="15" height="14"><rect x="0.5" y="0.5" width="13" height="12" fill="#fff" stroke="#8aa0c8" stroke-width="1"/><rect x="1" y="1" width="12" height="3" fill="#5b8de0"/><g stroke="#c0cce0" stroke-width="0.8"><path d="M1 7h12M1 10h12M5 4v9M9 4v9"/></g><path d="M0.5 12.5h13" stroke="#4060a0" stroke-width="1"/></svg>
<div class="t" style="top:826.59px;font-size:11px;line-height:11px;color:#111;letter-spacing:-0.205px;left:778.8px;">Superposition</div>
<svg style="left:1521px;top:825px" width="12" height="12"><path d="M2.5 2.5l7 7M9.5 2.5l-7 7" stroke="#222" stroke-width="1.4"/></svg>
<div class="a" style="left:739px;top:221px;width:790px;height:581px;background:#fff;border:1px solid #7d7d7d;"></div>
<div class="t" style="top:230.27px;font-size:11.5px;line-height:11.5px;color:#111;letter-spacing:0.018px;left:748px;">Define drilling profiles...</div>
<svg style="left:1505px;top:228px" width="16" height="16"><path d="M2.5 2.5l10.5 10.5M13 2.5l-10.5 10.5" stroke="#222" stroke-width="1.1"/></svg>
<div class="a" style="left:745px;top:255.3px;width:288px;height:23.19999999999999px;background:#e3e3e3;border-bottom:1px solid #d2d2d2;"></div>
<div class="t" style="top:261.50px;font-size:11.7px;line-height:11.7px;color:#5d6373;letter-spacing:0.006px;left:749px;">Soil profile</div>
<div class="a" style="left:745px;top:278.5px;width:288px;height:24.100000000000023px;background:#f2f2f2;border-bottom:1px solid #d2d2d2;"></div>
<div class="t" style="top:285.50px;font-size:11.7px;line-height:11.7px;color:#5d6373;letter-spacing:-0.306px;left:749px;">Soil layers</div>
<div class="a" style="left:745px;top:302.6px;width:288px;height:24.0px;background:#e3e3e3;border-bottom:1px solid #d2d2d2;"></div>
<div class="t" style="top:308.80px;font-size:11.7px;line-height:11.7px;color:#5d6373;letter-spacing:-0.295px;left:749px;">General soil parameter</div>
<div class="a" style="left:745px;top:345.8px;width:288px;height:1px;background:#dcdcdc;"></div>
<div class="a" style="left:880px;top:326.6px;width:1px;height:20.19999999999999px;background:#dcdcdc;"></div>
<div class="t" style="top:331.19px;font-size:11px;line-height:11px;color:#111;letter-spacing:-0.472px;left:749px;">Designation</div>
<div class="t" style="top:331.19px;font-size:11px;line-height:11px;color:#111;letter-spacing:-0.577px;right:508px;">GU</div>
<div class="a" style="left:745px;top:366.3px;width:288px;height:1px;background:#dcdcdc;"></div>
<div class="a" style="left:880px;top:346.8px;width:1px;height:20.5px;background:#dcdcdc;"></div>
<div class="t" style="top:351.39px;font-size:11px;line-height:11px;color:#111;letter-spacing:-0.346px;left:749px;">Thickness</div>
<div class="t" style="top:351.39px;font-size:11px;line-height:11px;color:#111;right:664.5px;">d</div>
<div class="t" style="top:351.39px;font-size:11px;line-height:11px;color:#8c8c8c;letter-spacing:-0.356px;left:884px;">[m]</div>
<div class="t" style="top:351.39px;font-size:11px;line-height:11px;color:#111;letter-spacing:-0.375px;right:508px;">1.00</div>
<div class="a" style="left:745px;top:386.5px;width:288px;height:1px;background:#dcdcdc;"></div>
<div class="a" style="left:880px;top:367.3px;width:1px;height:20.19999999999999px;background:#dcdcdc;"></div>
<div class="t" style="top:371.89px;font-size:11px;line-height:11px;color:#111;letter-spacing:-0.434px;left:749px;">Stroke weight</div>
<div class="t" style="top:371.89px;font-size:11px;line-height:11px;color:#111;right:664.5px;">γ</div>
<div class="t" style="top:371.89px;font-size:11px;line-height:11px;color:#8c8c8c;letter-spacing:-0.354px;left:884px;">[kN/m³]</div>
<div class="t" style="top:371.89px;font-size:11px;line-height:11px;color:#111;letter-spacing:-0.385px;right:508px;">18.00</div>
<div class="a" style="left:745px;top:406.5px;width:288px;height:1px;background:#dcdcdc;"></div>
<div class="a" style="left:880px;top:387.5px;width:1px;height:20.0px;background:#dcdcdc;"></div>
<div class="t" style="top:392.09px;font-size:11px;line-height:11px;color:#111;letter-spacing:-0.384px;left:749px;">Buoyant unit weight</div>
<div class="t" style="top:392.09px;font-size:11px;line-height:11px;color:#111;right:664.5px;">γ'</div>
<div class="t" style="top:392.09px;font-size:11px;line-height:11px;color:#8c8c8c;letter-spacing:-0.354px;left:884px;">[kN/m³]</div>
<div class="t" style="top:392.09px;font-size:11px;line-height:11px;color:#111;letter-spacing:-0.375px;right:508px;">8.00</div>
<div class="a" style="left:745px;top:407.5px;width:288px;height:24.19999999999999px;background:#e3e3e3;border-bottom:1px solid #d2d2d2;"></div>
<div class="t" style="top:413.70px;font-size:11.7px;line-height:11.7px;color:#5d6373;letter-spacing:-0.187px;left:749px;">Soil drained parameters</div>
<div class="a" style="left:745px;top:450.4px;width:288px;height:1px;background:#dcdcdc;"></div>
<div class="a" style="left:880px;top:431.7px;width:1px;height:19.69999999999999px;background:#dcdcdc;"></div>
<div class="t" style="top:436.29px;font-size:11px;line-height:11px;color:#111;letter-spacing:-0.296px;left:749px;">Effective friction angle</div>
<div class="t" style="top:436.29px;font-size:11px;line-height:11px;color:#111;right:664.5px;">φ'</div>
<div class="t" style="top:436.29px;font-size:11px;line-height:11px;color:#8c8c8c;letter-spacing:-0.245px;left:884px;">[°]</div>
<div class="t" style="top:436.29px;font-size:11px;line-height:11px;color:#111;letter-spacing:-0.375px;right:508px;">30.0</div>
<div class="a" style="left:745px;top:470.3px;width:288px;height:1px;background:#dcdcdc;"></div>
<div class="a" style="left:880px;top:451.4px;width:1px;height:19.900000000000034px;background:#dcdcdc;"></div>
<div class="t" style="top:455.99px;font-size:11px;line-height:11px;color:#111;letter-spacing:-0.597px;left:749px;">Cohesion</div>
<div class="t" style="top:455.99px;font-size:11px;line-height:11px;color:#111;right:664.5px;">c'</div>
<div class="t" style="top:455.99px;font-size:11px;line-height:11px;color:#8c8c8c;letter-spacing:-0.354px;left:884px;">[kN/m²]</div>
<div class="t" style="top:455.99px;font-size:11px;line-height:11px;color:#111;letter-spacing:-0.375px;right:508px;">0.00</div>
<div class="a" style="left:745px;top:471.3px;width:288px;height:24.099999999999966px;background:#e3e3e3;border-bottom:1px solid #d2d2d2;"></div>
<div class="t" style="top:477.50px;font-size:11.7px;line-height:11.7px;color:#5d6373;letter-spacing:-0.105px;left:749px;">Settlement parameter</div>
<div class="a" style="left:745px;top:514.7px;width:288px;height:1px;background:#dcdcdc;"></div>
<div class="a" style="left:880px;top:495.4px;width:1px;height:20.300000000000068px;background:#dcdcdc;"></div>
<div class="t" style="top:499.99px;font-size:11px;line-height:11px;color:#111;letter-spacing:-0.494px;left:749px;">Procedure</div>
<div class="a" style="left:745px;top:535px;width:288px;height:1px;background:#dcdcdc;"></div>
<div class="a" style="left:880px;top:515.7px;width:1px;height:20.299999999999955px;background:#dcdcdc;"></div>
<div class="t" style="top:520.29px;font-size:11px;line-height:11px;color:#111;letter-spacing:-0.629px;left:749px;">Compression module</div>
<div class="t" style="top:520.29px;font-size:11px;line-height:11px;color:#111;right:664.5px;">E*</div>
<div class="t" style="top:520.29px;font-size:11px;line-height:11px;color:#8c8c8c;letter-spacing:-0.354px;left:884px;">[kN/m²]</div>
<div class="t" style="top:520.29px;font-size:11px;line-height:11px;color:#111;letter-spacing:-0.398px;right:508px;">5000.00</div>
<div class="a" style="left:745px;top:555.3px;width:288px;height:1px;background:#dcdcdc;"></div>
<div class="a" style="left:880px;top:536px;width:1px;height:20.299999999999955px;background:#dcdcdc;"></div>
<div class="t" style="top:540.59px;font-size:11px;line-height:11px;color:#111;letter-spacing:-0.525px;left:749px;">Rigid module</div>
<div class="t" style="top:540.59px;font-size:11px;line-height:11px;color:#111;right:664.5px;">Es</div>
<div class="t" style="top:540.59px;font-size:11px;line-height:11px;color:#8c8c8c;letter-spacing:-0.354px;left:884px;">[kN/m²]</div>
<div class="t" style="top:540.59px;font-size:11px;line-height:11px;color:#8c8c8c;letter-spacing:-0.392px;right:508px;">500.00</div>
<div class="a" style="left:745px;top:575.4px;width:288px;height:1px;background:#dcdcdc;"></div>
<div class="a" style="left:880px;top:556.3px;width:1px;height:20.100000000000023px;background:#dcdcdc;"></div>
<div class="t" style="top:560.89px;font-size:11px;line-height:11px;color:#111;letter-spacing:-0.382px;left:749px;">Correction factor</div>
<div class="t" style="top:560.89px;font-size:11px;line-height:11px;color:#111;right:664.5px;">ξ</div>
<div class="t" style="top:560.89px;font-size:11px;line-height:11px;color:#8c8c8c;letter-spacing:-0.375px;right:508px;">0.67</div>
<div class="a" style="left:745px;top:576.4px;width:288px;height:24.399999999999977px;background:#e3e3e3;border-bottom:1px solid #d2d2d2;"></div>
<div class="t" style="top:582.60px;font-size:11.7px;line-height:11.7px;color:#5d6373;letter-spacing:-0.076px;left:749px;">Consolidation</div>
<div class="a" style="left:745px;top:619.5px;width:288px;height:1px;background:#dcdcdc;"></div>
<div class="a" style="left:880px;top:600.8px;width:1px;height:19.700000000000045px;background:#dcdcdc;"></div>
<div class="t" style="top:605.39px;font-size:11px;line-height:11px;color:#111;letter-spacing:-0.412px;left:749px;">Permeability coefficient</div>
<div class="t" style="top:605.39px;font-size:11px;line-height:11px;color:#111;right:664.5px;">k</div>
<div class="t" style="top:605.39px;font-size:11px;line-height:11px;color:#8c8c8c;letter-spacing:-0.334px;left:884px;">[m/s]</div>
<div class="t" style="top:605.39px;font-size:11px;line-height:11px;color:#111;letter-spacing:-0.411px;right:508px;">1E-07</div>
<div class="a" style="left:745px;top:639.7px;width:288px;height:1px;background:#dcdcdc;"></div>
<div class="a" style="left:880px;top:620.5px;width:1px;height:20.200000000000045px;background:#dcdcdc;"></div>
<div class="t" style="top:625.09px;font-size:11px;line-height:11px;color:#111;letter-spacing:-0.405px;left:749px;">Drained on both sides</div>
<div class="a" style="left:745px;top:640.7px;width:288px;height:23.899999999999977px;background:#e3e3e3;border-bottom:1px solid #d2d2d2;"></div>
<div class="t" style="top:646.90px;font-size:11.7px;line-height:11.7px;color:#5d6373;letter-spacing:-0.573px;left:749px;">Creep</div>
<div class="a" style="left:745px;top:683.6px;width:288px;height:1px;background:#dcdcdc;"></div>
<div class="a" style="left:880px;top:664.6px;width:1px;height:20.0px;background:#dcdcdc;"></div>
<div class="t" style="top:669.19px;font-size:11px;line-height:11px;color:#111;letter-spacing:-0.385px;left:749px;">Creep coefficient</div>
<div class="t" style="top:669.19px;font-size:11px;line-height:11px;color:#111;right:664.5px;">Cα</div>
<div class="t" style="top:669.19px;font-size:11px;line-height:11px;color:#111;letter-spacing:-0.398px;right:508px;">0.00300</div>
<div class="a" style="left:745px;top:704px;width:288px;height:1px;background:#dcdcdc;"></div>
<div class="a" style="left:880px;top:684.6px;width:1px;height:20.399999999999977px;background:#dcdcdc;"></div>
<div class="t" style="top:689.19px;font-size:11px;line-height:11px;color:#111;letter-spacing:-0.515px;left:749px;">Number of pores</div>
<div class="t" style="top:689.19px;font-size:11px;line-height:11px;color:#111;right:664.5px;">e0</div>
<div class="t" style="top:689.19px;font-size:11px;line-height:11px;color:#111;letter-spacing:-0.375px;right:508px;">0.70</div>
<div class="a" style="left:922px;top:538px;width:106px;height:15px;background:#f0f0f0;"></div>
<div class="a" style="left:883px;top:558.5px;width:145px;height:14px;background:#f0f0f0;"></div>
<div class="t" style="top:540.59px;font-size:11px;line-height:11px;color:#8c8c8c;letter-spacing:-0.392px;right:508px;">500.00</div>
<div class="t" style="top:560.89px;font-size:11px;line-height:11px;color:#8c8c8c;letter-spacing:-0.375px;right:508px;">0.67</div>
<div class="t" style="top:500.19px;font-size:11px;line-height:11px;color:#111;letter-spacing:-0.478px;left:884px;">Default  E*</div>
<div class="a" style="left:1016.5px;top:497px;width:16px;height:18.5px;background:#f0f0f0;"></div>
<div class="a" style="left:1017px;top:623.9px;width:13px;height:12.5px;background:#fff;border:1px solid #333;"></div>
<div class="t" style="top:285.23px;font-size:11.3px;line-height:11.3px;color:#111;letter-spacing:0.131px;left:901.6px;">1/4</div>
<div class="a" style="left:893.4px;top:279.6px;width:33.4px;height:22.3px;background:#fff;border:2px solid #777;"></div>
<div class="t" style="top:285.23px;font-size:11.3px;line-height:11.3px;color:#111;letter-spacing:0.131px;left:901.6px;">1/4</div>
<svg style="left:745px;top:255px" width="290" height="452"><g transform="translate(-745,-255)"><circle cx="1022.9" cy="267.3" r="6.3" fill="#8e9bd8"/><circle cx="1022.9" cy="267.3" r="6.3" fill="none" stroke="#aab4e6" stroke-width="0.8"/><path d="M1019.6999999999999 267.5l3.2-2.7 3.2 2.7M1019.6999999999999 270.7l3.2-2.7 3.2 2.7" fill="none" stroke="#fff" stroke-width="1.2"/><circle cx="1022.9" cy="314.6" r="6.3" fill="#8e9bd8"/><circle cx="1022.9" cy="314.6" r="6.3" fill="none" stroke="#aab4e6" stroke-width="0.8"/><path d="M1019.6999999999999 314.8l3.2-2.7 3.2 2.7M1019.6999999999999 318.0l3.2-2.7 3.2 2.7" fill="none" stroke="#fff" stroke-width="1.2"/><circle cx="1022.9" cy="419.5" r="6.3" fill="#8e9bd8"/><circle cx="1022.9" cy="419.5" r="6.3" fill="none" stroke="#aab4e6" stroke-width="0.8"/><path d="M1019.6999999999999 419.7l3.2-2.7 3.2 2.7M1019.6999999999999 422.9l3.2-2.7 3.2 2.7" fill="none" stroke="#fff" stroke-width="1.2"/><circle cx="1022.9" cy="483.3" r="6.3" fill="#8e9bd8"/><circle cx="1022.9" cy="483.3" r="6.3" fill="none" stroke="#aab4e6" stroke-width="0.8"/><path d="M1019.6999999999999 483.5l3.2-2.7 3.2 2.7M1019.6999999999999 486.7l3.2-2.7 3.2 2.7" fill="none" stroke="#fff" stroke-width="1.2"/><circle cx="1022.9" cy="588.4" r="6.3" fill="#8e9bd8"/><circle cx="1022.9" cy="588.4" r="6.3" fill="none" stroke="#aab4e6" stroke-width="0.8"/><path d="M1019.6999999999999 588.6l3.2-2.7 3.2 2.7M1019.6999999999999 591.8l3.2-2.7 3.2 2.7" fill="none" stroke="#fff" stroke-width="1.2"/><circle cx="1022.9" cy="652.7" r="6.3" fill="#8e9bd8"/><circle cx="1022.9" cy="652.7" r="6.3" fill="none" stroke="#aab4e6" stroke-width="0.8"/><path d="M1019.6999999999999 652.9000000000001l3.2-2.7 3.2 2.7M1019.6999999999999 656.1l3.2-2.7 3.2 2.7" fill="none" stroke="#fff" stroke-width="1.2"/>
<path d="M1020.5 504.5h7l-3.5 3.5z" fill="#222"/>
<circle cx="882.5" cy="291.3" r="6.5" fill="#c9c9c9"/><path d="M884.3 287.8l-3.8 3.5 3.8 3.5z" fill="#fff"/>
<circle cx="938.3" cy="291.3" r="6.5" fill="#8e9bd8"/><path d="M936.5 287.8l3.8 3.5-3.8 3.5z" fill="#fff"/>
<path d="M953 284.5h8l3.5 3.5v11h-11.5z" fill="#f0f0f0" stroke="#c4c4c4" stroke-width="0.9"/>
<path d="M960.5 295h7M964 291.5v7" stroke="#aaa" stroke-width="2.2"/>
<path d="M976.5 287.5l9.5 9.5M986 287.5l-9.5 9.5" stroke="#999" stroke-width="1.5"/>
<g fill="none" stroke="#999" stroke-width="1"><rect x="996" y="288" width="13" height="10.5"/><path d="M996 291.5h13M996 295h13M1000.3 288v10.5M1004.6 288v10.5"/></g>
<path d="M995.5 284.5l4.5 4.5M1000 284.5l-4.5 4.5" stroke="#999" stroke-width="1"/>
<rect x="1017" y="287" width="12" height="11.5" rx="1" fill="#dbe6f4" stroke="#4a6a9a" stroke-width="0.9"/>
<rect x="1020.5" y="285" width="5.5" height="3" fill="#e8c860" stroke="#8a7a40" stroke-width="0.6"/>
<path d="M1019.5 292.5l2.5 3 5.5-6" fill="none" stroke="#e03020" stroke-width="1.6"/>
</g></svg>
<div class="a" style="left:740px;top:715.5px;width:787px;height:54.5px;background:#f0f0f0;"></div>
<div class="t" style="top:718.39px;font-size:11px;line-height:11px;color:#111;letter-spacing:-0.411px;left:744px;">Specifies the soil layers.</div>
<div class="a" style="left:740px;top:770px;width:787px;height:31px;background:#d4d4d4;"></div>
<div class="a" style="left:1329px;top:774px;width:93.5px;height:23px;background:#e1e1e1;border:1px solid #adadad;"></div>
<div class="a" style="left:1429.5px;top:774px;width:93.5px;height:23px;background:#e1e1e1;border:1px solid #adadad;"></div>
<div class="t" style="top:779.87px;font-size:11.5px;line-height:11.5px;color:#111;left:975.5px;width:800px;text-align:center;">OK</div>
<div class="t" style="top:779.87px;font-size:11.5px;line-height:11.5px;color:#111;letter-spacing:-0.466px;left:1076px;width:800px;text-align:center;">Cancel</div>
<div class="a" style="left:1046px;top:256px;width:477px;height:453px;background:#fff;border-top:2px solid #6f6f6f;border-left:2px solid #6f6f6f;border-right:1px solid #e6e6e6;border-bottom:1px solid #e6e6e6;"></div>
<div class="t" style="top:286.91px;font-size:17px;line-height:17px;color:#222;letter-spacing:0.535px;left:1076px;">Drilling profile: "Profile 1" bei x=10.00 m, y=10.00 m</div>
<svg style="left:1048px;top:258px" width="474" height="450"><g transform="translate(-1048,-258)"><rect x="1218.3" y="339" width="131.79999999999995" height="41.4" fill="#fffee8"/><rect x="1218.3" y="380.4" width="131.79999999999995" height="41.3" fill="#faf0e4"/><rect x="1218.3" y="421.7" width="131.79999999999995" height="123.3" fill="#fffee8"/><rect x="1218.3" y="545" width="131.79999999999995" height="123" fill="#faf0e4"/><path d="M1218.3 338.7h131.79999999999995" stroke="#222" stroke-width="1.2"/><path d="M1136.5 329.5v349" stroke="#8a8ab8" stroke-width="1"/><circle cx="1136.5" cy="338.7" r="5.8" fill="none" stroke="#8a8ab8" stroke-width="1"/><path d="M1125.5 338.7h21" stroke="#8a8ab8" stroke-width="1"/><path d="M1376 338.7h15" stroke="#222" stroke-width="1"/><path d="M1377.5 329.7h12l-6 8z" fill="#222"/><circle cx="1136.5" cy="380.4" r="5.8" fill="none" stroke="#8a8ab8" stroke-width="1"/><path d="M1125.5 380.4h21" stroke="#8a8ab8" stroke-width="1"/><path d="M1376 380.4h15" stroke="#222" stroke-width="1"/><path d="M1377.5 371.4h12l-6 8z" fill="#222"/><circle cx="1136.5" cy="421.7" r="5.8" fill="none" stroke="#8a8ab8" stroke-width="1"/><path d="M1125.5 421.7h21" stroke="#8a8ab8" stroke-width="1"/><path d="M1376 421.7h15" stroke="#222" stroke-width="1"/><path d="M1377.5 412.7h12l-6 8z" fill="#222"/><circle cx="1136.5" cy="545" r="5.8" fill="none" stroke="#8a8ab8" stroke-width="1"/><path d="M1125.5 545h21" stroke="#8a8ab8" stroke-width="1"/><path d="M1376 545h15" stroke="#222" stroke-width="1"/><path d="M1377.5 536h12l-6 8z" fill="#222"/><circle cx="1136.5" cy="668" r="5.8" fill="none" stroke="#8a8ab8" stroke-width="1"/><path d="M1125.5 668h21" stroke="#8a8ab8" stroke-width="1"/><path d="M1376 668h15" stroke="#222" stroke-width="1"/><path d="M1377.5 659h12l-6 8z" fill="#222"/><text x="0" y="0" transform="translate(1133.3,359.5) rotate(-90)" text-anchor="middle" font-family="Liberation Sans" font-size="11" fill="#8a8ab8">1,00</text><text x="0" y="0" transform="translate(1133.3,401) rotate(-90)" text-anchor="middle" font-family="Liberation Sans" font-size="11" fill="#8a8ab8">1,00</text><text x="0" y="0" transform="translate(1133.3,483) rotate(-90)" text-anchor="middle" font-family="Liberation Sans" font-size="11" fill="#8a8ab8">3,00</text><text x="0" y="0" transform="translate(1133.3,606) rotate(-90)" text-anchor="middle" font-family="Liberation Sans" font-size="11" fill="#8a8ab8">3,00</text></g></svg>
<div class="t" style="top:316.73px;font-size:11.3px;line-height:11.3px;color:#333;letter-spacing:0.202px;left:1356.6px;">0,00</div>
<div class="t" style="top:357.73px;font-size:11.3px;line-height:11.3px;color:#333;letter-spacing:0.202px;left:1356.6px;">1,00</div>
<div class="t" style="top:399.13px;font-size:11.3px;line-height:11.3px;color:#333;letter-spacing:0.202px;left:1356.6px;">2,00</div>
<div class="t" style="top:522.43px;font-size:11.3px;line-height:11.3px;color:#333;letter-spacing:0.202px;left:1356.6px;">5,00</div>
<div class="t" style="top:645.43px;font-size:11.3px;line-height:11.3px;color:#333;letter-spacing:0.202px;left:1356.6px;">8,00</div>
<div class="t" style="top:355.13px;font-size:11.3px;line-height:11.3px;color:#333;left:1225.5px;">GU</div>
<div class="t" style="top:396.83px;font-size:11.3px;line-height:11.3px;color:#333;left:1225.5px;">UA</div>
<div class="t" style="top:478.73px;font-size:11.3px;line-height:11.3px;color:#333;left:1225.5px;">UA</div>
<div class="t" style="top:602.13px;font-size:11.3px;line-height:11.3px;color:#333;left:1225.5px;">UA</div>
</body></html>
